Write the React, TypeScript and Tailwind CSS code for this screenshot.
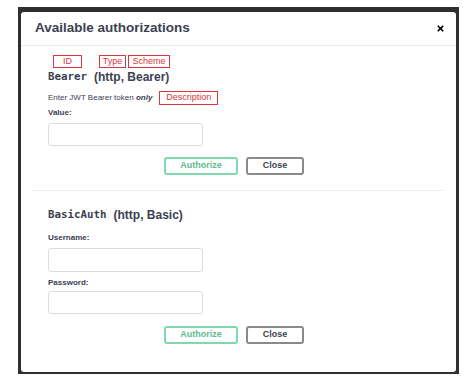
import { X } from "lucide-react";

const sans = "font-['Liberation_Sans',Arial,sans-serif]";

function Tag({ label, className }: { label: string; className: string }) {
    return (
        <span className={`flex h-[13px] items-center justify-center border-[1.5px] border-[#d9363e] text-[9px] leading-none text-[#d9363e] ${className}`}>
            {label}
        </span>
    );
}

function Buttons() {
    return (
        <div className="flex">
            <button className="ml-[116px] h-full w-[74px] rounded-[3px] border-2 border-[#7fd8ae] text-[9px] font-bold text-[#5dbb8e]">
                Authorize
            </button>
            <button className="ml-[8px] h-full w-[58px] rounded-[3px] border-2 border-[#8a8a8a] text-[9px] font-bold text-[#3b4151]">
                Close
            </button>
        </div>
    );
}

function Title({ id, rest }: { id: string; rest: string }) {
    return (
        <h4 className="flex h-[14px] items-center text-[12px] font-bold leading-[14px] text-[#3b4151]">
            <code className="font-['DejaVu_Sans_Mono',monospace] text-[10.8px] font-semibold">{id}</code>
            <span className="ml-[7px]">{rest}</span>
        </h4>
    );
}

export default function App() {
    return (
        <div className={`h-[385px] w-[474px] bg-white pt-[7px] ${sans}`}>
            <div className="ml-[18px] h-[367px] w-[441px] bg-[#2f2f2f] px-[3px] pb-[2px] pt-[5px]">
                <div className="h-full rounded-[3px] bg-white">
                    {/* header */}
                    <div className="flex h-[34px] items-center justify-between border-b border-[#ebebeb] pl-[14px] pr-[11px]">
                        <h3 className="text-[13.5px] font-bold text-[#3b4151]">Available authorizations</h3>
                        <X className="h-[9px] w-[9px] text-black" strokeWidth={4.5} />
                    </div>

                    <div className="px-[12px]">
                        {/* Bearer */}
                        <div className="border-b border-[#ececec] px-[15px] pb-[13px]">
                            <div className="mt-[9px] flex h-[13px]">
                                <Tag label="ID" className="ml-[5px] w-[29px]" />
                                <Tag label="Type" className="ml-[17px] w-[27px]" />
                                <Tag label="Scheme" className="ml-[2px] w-[42px]" />
                            </div>
                            <div className="mt-[2px]">
                                <Title id="Bearer" rest="(http, Bearer)" />
                            </div>
                            <div className="mt-[7px] flex h-[14px] items-center">
                                <span className="text-[8px] text-[#3b4151]">
                                    Enter JWT Bearer token <b><i>only</i></b>
                                </span>
                                <span className="ml-[7px] flex h-[14px] w-[59px] items-center justify-center border-[1.5px] border-[#d9363e] text-[9px] text-[#d9363e]">
                                    Description
                                </span>
                            </div>
                            <div className="mt-[3px] h-[10px] text-[8px] font-bold leading-[10px] text-[#3b4151]">Value:</div>
                            <input className="mt-[5px] block h-[23px] w-[155px] rounded-[3px] border border-[#dcdcdc] bg-white" />
                            <div className="mt-[11px] h-[20px]">
                                <Buttons />
                            </div>
                        </div>

                        {/* BasicAuth */}
                        <div className="px-[15px]">
                            <div className="mt-[17px]">
                                <Title id="BasicAuth" rest="(http, Basic)" />
                            </div>
                            <div className="mt-[11px] h-[10px] text-[8px] font-bold leading-[10px] text-[#3b4151]">Username:</div>
                            <input className="mt-[5px] block h-[24px] w-[155px] rounded-[3px] border border-[#dcdcdc] bg-white" />
                            <div className="mt-[6px] h-[10px] text-[8px] font-bold leading-[10px] text-[#3b4151]">Password:</div>
                            <input type="password" className="mt-[3px] block h-[23px] w-[155px] rounded-[3px] border border-[#dcdcdc] bg-white" />
                            <div className="mt-[12px] h-[19px]">
                                <Buttons />
                            </div>
                        </div>
                    </div>
                </div>
            </div>
        </div>
    );
}
